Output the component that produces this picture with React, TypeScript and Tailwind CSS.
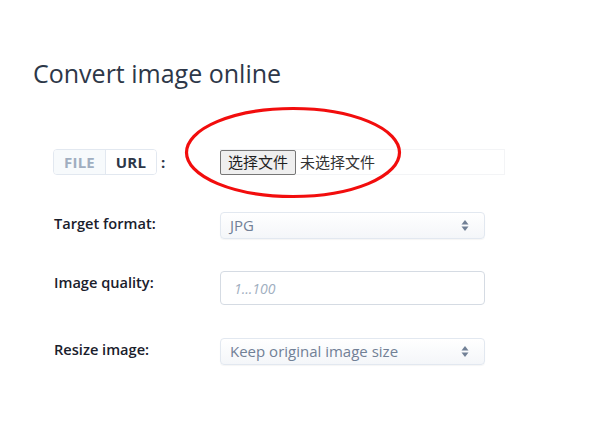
import React from 'react';

const SelectArrows: React.FC = () => (
  <svg width="8" height="13" viewBox="0 0 8 13" className="shrink-0">
    <path d="M4 1 L7.5 5.5 L0.5 5.5 Z" fill="#718096" />
    <path d="M4 12 L7.5 7.5 L0.5 7.5 Z" fill="#718096" />
  </svg>
);

const FakeSelect: React.FC<{ value: string }> = ({ value }) => (
  <div className="w-[265px] h-[27px] flex items-center justify-between pl-[9px] pr-[15px] border border-[#e2e8f0] rounded-[4px] bg-gradient-to-b from-white to-[#f4f6f9] shadow-[0_1px_1px_rgba(0,0,0,0.04)] text-[15px] text-[#718096]">
    <span>{value}</span>
    <SelectArrows />
  </div>
);

const Label: React.FC<{ children: React.ReactNode }> = ({ children }) => (
  <div className="w-[167px] pl-[1px] pt-[1px] text-[14.6px] leading-[20px] font-semibold text-[#1a202c]">
    {children}
  </div>
);

export default function App() {
  return (
    <div className="relative min-h-screen bg-white font-['Open_Sans',sans-serif]">
      <div className="pt-[57px] pl-[33px]">
        <h1 className="text-[25px] leading-[33px] text-[#2d3748]">Convert image online</h1>
      </div>

      <div className="pl-[53px] mt-[59px] flex flex-col">
        <div className="flex items-center h-[26px]">
          <div className="w-[167px] flex items-center">
            <div className="flex h-[26px] border border-[#e2e8f0] rounded-[4px] overflow-hidden text-[15px] font-bold tracking-[0.2px]">
              <span className="w-[51px] flex items-center justify-center bg-[#f7fafc] text-[#a0aec0]">FILE</span>
              <span className="w-[51px] flex items-center justify-center bg-white text-[#2d3748] border-l border-[#e2e8f0]">URL</span>
            </div>
            <span className="ml-[4px] text-[15px] font-bold text-[#2d3748]">:</span>
          </div>
          <div className="w-[285px] h-[26px] flex items-center border border-[#f3f4f6] font-['Noto_Sans_CJK_SC',sans-serif] text-[15px] text-[#1f1f1f]">
            <span className="h-[25px] px-[7px] flex items-center border border-[#767676] rounded-[2px] bg-[#efefef] -ml-px">选择文件</span>
            <span className="ml-[4px] text-[#333]">未选择文件</span>
          </div>
        </div>

        <div className="flex items-start mt-[37px]">
          <Label>Target format:</Label>
          <FakeSelect value="JPG" />
        </div>

        <div className="flex items-start mt-[32px]">
          <Label>Image quality:</Label>
          <div className="w-[265px] h-[34px] flex items-center pl-[13px] border border-[#d5dbe3] rounded-[4px] bg-white text-[14px] italic text-[#a0aec0]">
            1...100
          </div>
        </div>

        <div className="flex items-start mt-[33px]">
          <Label>Resize image:</Label>
          <FakeSelect value="Keep original image size" />
        </div>
      </div>

      <svg className="absolute left-[184px] top-[106px]" width="218" height="93" viewBox="0 0 218 93">
        <ellipse cx="109" cy="46.5" rx="106.5" ry="44" fill="none" stroke="#f20d0d" strokeWidth="3.2" />
      </svg>
    </div>
  );
}
